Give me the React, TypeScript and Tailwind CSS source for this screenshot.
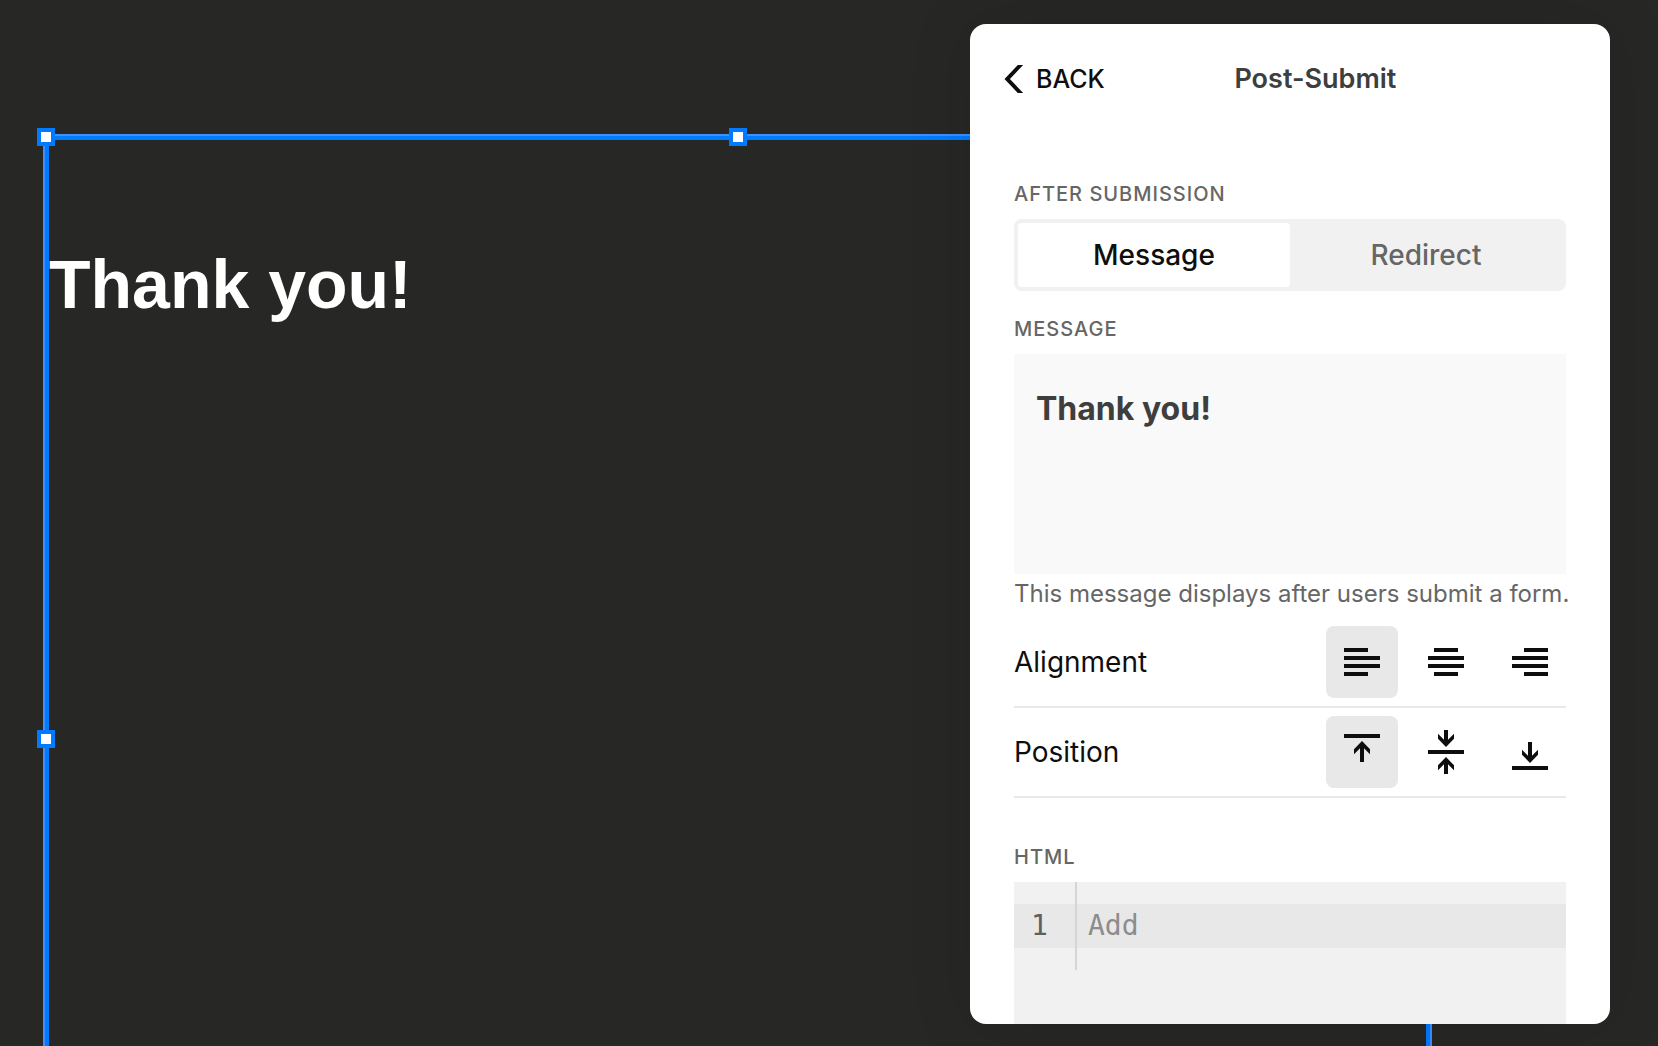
import { useState, type ReactNode } from "react";

function Handle({ className }: { className: string }) {
  return (
    <span
      aria-hidden="true"
      className={`absolute size-[18px] border-4 border-[#007aff] bg-white ${className}`}
    />
  );
}

function Bars({ rows }: { rows: [number, number][] }) {
  return (
    <svg width="36" height="28" viewBox="0 0 36 28" fill="currentColor" aria-hidden="true">
      {rows.map(([x, w], i) => (
        <rect key={i} x={x} y={i * 8} width={w} height="4" />
      ))}
    </svg>
  );
}

function Glyph({ bar, paths }: { bar: number; paths: string[] }) {
  return (
    <svg width="36" height="44" viewBox="0 0 36 44" fill="currentColor" aria-hidden="true">
      <rect x="0" y={bar} width="36" height="4" />
      {paths.map((d) => (
        <path key={d} d={d} />
      ))}
    </svg>
  );
}

type Option = { name: string; icon: ReactNode };

const alignments: Option[] = [
  { name: "Left", icon: <Bars rows={[[0, 24], [0, 36], [0, 36], [0, 24]]} /> },
  { name: "Center", icon: <Bars rows={[[6, 24], [0, 36], [0, 36], [6, 24]]} /> },
  { name: "Right", icon: <Bars rows={[[12, 24], [0, 36], [0, 36], [12, 24]]} /> },
];

const positions: Option[] = [
  {
    name: "Top",
    icon: <Glyph bar={4} paths={["M18 11L26 19.3V24.3L20 18.3V32H16V18.3L10 24.3V19.3Z"]} />,
  },
  {
    name: "Middle",
    icon: (
      <Glyph
        bar={20}
        paths={[
          "M18 27L26 35.3V40.3L20 34.3V44H16V34.3L10 40.3V35.3Z",
          "M18 17L26 8.7V3.7L20 9.7V0H16V9.7L10 3.7V8.7Z",
        ]}
      />
    ),
  },
  {
    name: "Bottom",
    icon: <Glyph bar={36} paths={["M18 33L26 24.7V19.7L20 25.7V12H16V25.7L10 19.7V24.7Z"]} />,
  },
];

function OptionRow({ label, options }: { label: string; options: Option[] }) {
  const [selected, setSelected] = useState(0);
  return (
    <div className="flex items-center justify-between border-b-2 border-[#e8e8e8] py-2">
      <span className="text-[28px] leading-9">{label}</span>
      <div role="group" aria-label={label} className="flex gap-3">
        {options.map((o, i) => (
          <button
            key={o.name}
            type="button"
            aria-label={o.name}
            aria-pressed={i === selected}
            onClick={() => setSelected(i)}
            className={`flex size-[72px] items-center justify-center rounded-lg ${
              i === selected ? "bg-[#e8e8e8]" : ""
            }`}
          >
            {o.icon}
          </button>
        ))}
      </div>
    </div>
  );
}

const caption = "text-[20px] leading-6 font-medium tracking-wider text-[#666] uppercase";

export default function App() {
  const [mode, setMode] = useState("Message");
  return (
    <main className="relative h-screen overflow-hidden bg-[#272726] pt-[134px] pr-[226px] pl-[43px] font-[Inter,sans-serif] text-[#0e0e0e]">
      <section className="relative h-[1210px] border-2 border-[#3f8fff]">
        <div className="h-full border-4 border-[#007aff] pt-[100px]">
          <h1 className="font-['Liberation_Sans',sans-serif] text-[68px] leading-[88px] font-bold text-white">
            Thank you!
          </h1>
        </div>
        <Handle className="-top-2 -left-2" />
        <Handle className="-top-2 left-1/2 -translate-x-1/2" />
        <Handle className="top-1/2 -left-2 -translate-y-1/2" />
      </section>

      <aside className="absolute top-6 right-12 bottom-[22px] flex w-[640px] flex-col overflow-hidden rounded-2xl bg-white shadow-[0_0_64px_rgba(0,0,0,0.12)]">
        <header className="flex items-center justify-between pt-[37px] pr-[44px] pl-[34px]">
          <button type="button" className="flex items-center gap-3 text-[25px] leading-9 font-medium">
            <svg width="20" height="28" viewBox="0 0 20 28" fill="currentColor" aria-hidden="true">
              <path d="M0.5 14L13.8 0H19.2L5.9 14L19.2 28H13.8Z" />
            </svg>
            BACK
          </button>
          <h2 className="text-[27px] leading-9 font-semibold text-[#3e3e3e]">Post-Submit</h2>
          <span className="w-10" />
        </header>

        <div className="flex min-h-0 flex-1 flex-col px-[44px] pt-[85px]">
          <h3 className={caption}>After submission</h3>
          <div className="mt-[13px] grid grid-cols-2 rounded-lg bg-[#f1f1f1] p-1">
            {["Message", "Redirect"].map((name) => (
              <button
                key={name}
                type="button"
                aria-pressed={mode === name}
                onClick={() => setMode(name)}
                className={`h-16 rounded text-[28px] font-medium ${
                  mode === name ? "bg-white" : "text-[#666]"
                }`}
              >
                {name}
              </button>
            ))}
          </div>

          <label htmlFor="message" className={`mt-[26px] ${caption}`}>
            Message
          </label>
          <textarea
            id="message"
            defaultValue="Thank you!"
            className="mt-[13px] h-[220px] shrink-0 resize-none bg-[#f9f9f9] px-[22px] py-[35px] text-[32px] leading-10 font-bold text-[#3e3e3e] outline-none"
          />
          <p className="mt-1 mb-2 text-[24px] leading-8 whitespace-nowrap text-[#666]">
            This message displays after users submit a form.
          </p>

          <OptionRow label="Alignment" options={alignments} />
          <OptionRow label="Position" options={positions} />

          <label htmlFor="html" className={`mt-[47px] ${caption}`}>
            HTML
          </label>
          <div className="mt-[13px] min-h-0 flex-1 bg-[#f1f1f1] font-['DejaVu_Sans_Mono',monospace] text-[28px] leading-[44px]">
            <div className="flex h-[88px] bg-[linear-gradient(transparent_22px,#e8e8e8_22px,#e8e8e8_66px,transparent_66px)]">
              <span className="w-[63px] border-r-2 border-[#d5d5d5] py-[22px] pl-[17px] text-[#5f5f5f]">1</span>
              <textarea
                id="html"
                rows={1}
                placeholder="Add"
                className="h-[88px] min-w-0 flex-1 resize-none py-[22px] pl-[11px] outline-none placeholder:text-[#8c8c8c]"
              />
            </div>
          </div>
        </div>
      </aside>
    </main>
  );
}
